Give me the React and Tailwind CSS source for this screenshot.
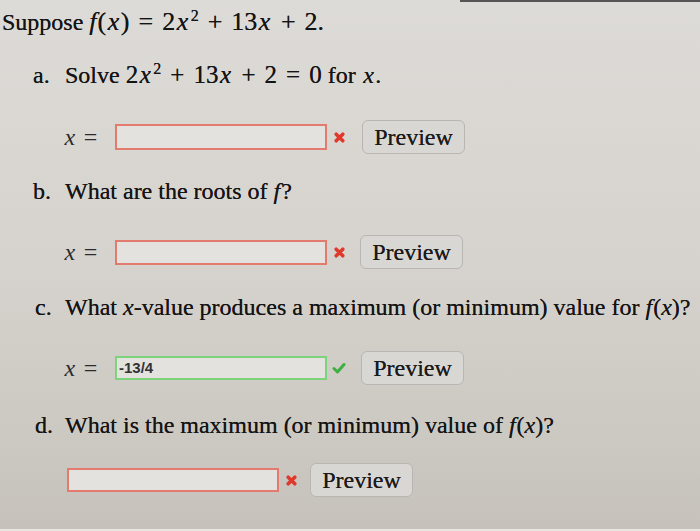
import React from "react";

const serif = { fontFamily: '"Liberation Serif", "Times New Roman", serif' };

function X({ tight }) {
  return <span className={`${tight ? "" : "px-[1.5px]"} italic`}>x</span>;
}
function F() {
  return <span className="pr-[1px] italic">f</span>;
}
function Op({ c }) {
  return <span className="mx-[9px]">{c}</span>;
}
function Sq() {
  return <span className="relative -top-[9px] ml-[1px] text-[16px]">2</span>;
}

function Cross() {
  return (
    <svg width="11" height="11" viewBox="0 0 10 10" className="shrink-0">
      <path d="M2 2 L8 8 M8 2 L2 8" stroke="#e0392b" strokeWidth="3.2" strokeLinecap="round" />
    </svg>
  );
}
function Check() {
  return (
    <svg width="14" height="12" viewBox="0 0 14 12" className="shrink-0">
      <path d="M2 6.5 L5.5 10 L12 2.5" stroke="#3cb043" strokeWidth="3" fill="none" strokeLinecap="round" strokeLinejoin="round" />
    </svg>
  );
}

function AnswerRow({ label = true, value = "", ok = false, indent, height = "h-[26px]", btnGap = "ml-[16px]" }) {
  return (
    <div className={`flex h-[40px] items-center ${indent}`}>
      {label && (
        <span className="w-[52px] whitespace-pre text-[24px] text-[#2a2a2a]">
          <X />
          <span className="ml-[7px]">=</span>
        </span>
      )}
      <div
        className={`flex w-[212px] ${height} items-center border-2 bg-[#e4e2de] px-[2px] ${ok ? "border-[#7dd37a]" : "border-[#e27a6e]"}`}
      >
        <span className="text-[15px] font-semibold text-[#333]" style={{ fontFamily: '"Liberation Sans", Arial, sans-serif' }}>
          {value}
        </span>
      </div>
      <span className="ml-[5px] flex w-[14px] justify-center">{ok ? <Check /> : <Cross />}</span>
      <div className={`${btnGap} flex h-[34px] w-[103px] items-center justify-center rounded-[6px] border border-[#b8b6b2] bg-[#d9d7d3] text-[24px] text-[#1a1a1a] [text-shadow:0_0_0.6px_#333]`}>
        Preview
      </div>
    </div>
  );
}

const line = "h-[40px] whitespace-nowrap text-[24px] leading-[40px] [text-shadow:0_0_0.6px_#333]";

export default function App() {
  return (
    <div
      className="relative h-[531px] w-[700px] overflow-hidden bg-[linear-gradient(180deg,#dddbd7_0%,#d6d3ce_50%,#c6c2bb_100%)] text-[#141414]"
      style={serif}
    >
      <div className="absolute right-0 top-0 h-[2px] w-[240px] bg-[#555]" />
      <div className="flex flex-col">
        <div className={`mt-[2px] pl-[2px] ${line}`}>
          Suppose{" "}
          <span className="text-[26px]">
            <F />(<X />)<Op c="=" />2<X />
            <Sq />
            <Op c="+" />13<X />
            <Op c="+" />2.
          </span>
        </div>
        <div className={`mt-[13px] pl-[33px] ${line}`}>
          <span className="inline-block w-[32px]">a.</span>Solve{" "}
          <span className="text-[25px]">
            2<X />
            <Sq />
            <Op c="+" />13<X />
            <Op c="+" />2<Op c="=" />0
          </span>{" "}
          for <X />.
        </div>
        <div className="mt-[22px]">
          <AnswerRow indent="pl-[63px]" />
        </div>
        <div className={`mt-[14px] pl-[33px] ${line}`}>
          <span className="inline-block w-[32px]">b.</span>What are the roots of <F />?
        </div>
        <div className="mt-[21px]">
          <AnswerRow indent="pl-[63px]" height="h-[25px]" btnGap="ml-[14px]" />
        </div>
        <div className={`mt-[15px] pl-[35px] ${line}`}>
          <span className="inline-block w-[30px]">c.</span>What <X tight />-value produces a maximum (or minimum) value for <F />(<X tight />)?
        </div>
        <div className="mt-[21px]">
          <AnswerRow indent="pl-[63px]" value="-13/4" ok height="h-[24px]" btnGap="ml-[15px]" />
        </div>
        <div className={`mt-[17px] pl-[35px] ${line}`}>
          <span className="inline-block w-[30px]">d.</span>What is the maximum (or minimum) value of <F />(<X tight />)?
        </div>
        <div className="mt-[15px]">
          <AnswerRow label={false} indent="pl-[67px]" height="h-[24px]" btnGap="ml-[12px]" />
        </div>
      </div>
      <div className="absolute bottom-0 left-0 h-[2px] w-full bg-[#e8e6e2]" />
    </div>
  );
}
